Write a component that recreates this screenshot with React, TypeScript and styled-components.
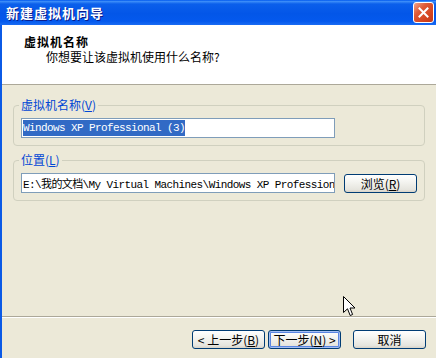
import React from 'react';
import styled, { createGlobalStyle } from 'styled-components';

const GlobalStyle = createGlobalStyle`
    html, body {
        margin:0;
        padding:0;
        background:#ECE9D8;
    }
    body{
        font-family:"Noto Sans CJK SC", "Liberation Sans", sans-serif;
        font-size:12px;
    }
`;

const Window = styled.div`
    position:relative;
    width:436px;
    height:358px;
    display:flex;
    flex-direction:column;
    overflow:hidden;
    background:#ECE9D8;
`;

const TitleBar = styled.div`
    height:25px;
    flex:none;
    display:flex;
    align-items:center;
    justify-content:space-between;
    padding:0 2px 0 6px;
    box-sizing:border-box;
    background:linear-gradient(to bottom, #0058EE 0%, #3A8BF8 6%, #0B5FEB 16%, #0356E8 55%, #0459ED 85%, #1A6CF3 100%);
`;

const Title = styled.span`
    color:white;
    font-weight:bold;
    font-size:13px;
    letter-spacing:1px;
    text-shadow:1px 1px #0A1E8C;
`;

const CloseButton = styled.div`
    width:21px;
    height:21px;
    box-sizing:border-box;
    border:1px solid white;
    border-radius:3px;
    background:linear-gradient(135deg, #F0A48A 0%, #E05A36 35%, #D2421E 75%, #C13A1B 100%);
    display:flex;
    align-items:center;
    justify-content:center;
`;

const Frame = styled.div`
    flex:1;
    display:flex;
    flex-direction:column;
    border-left:2px solid #0B5AE6;
    min-height:0;
`;

const Header = styled.div`
    height:60px;
    flex:none;
    box-sizing:border-box;
    background:white;
    border-bottom:1px solid #ACA899;
    padding:9px 0 0 22px;
    color:black;
`;

const HeaderTitle = styled.div`
    font-weight:bold;
    font-size:12px;
    line-height:15px;
    letter-spacing:1px;
`;

const HeaderText = styled.div`
    font-size:12px;
    line-height:16px;
    padding-left:22px;
`;

const Content = styled.div`
    flex:1;
    padding:13px 11px 0 11px;
    display:flex;
    flex-direction:column;
    gap:7px;
`;

const GroupBox = styled.fieldset`
    margin:0;
    padding:6px 7px 7px 7px;
    border:1px solid #D0D0BF;
    border-radius:4px;
    min-width:0;
`;

const GroupLabel = styled.legend`
    color:#0046D5;
    font-size:12px;
    line-height:14px;
    padding:0 2px;
    margin-left:-2px;
`;

const Key = styled.u`
    text-underline-offset:1px;
`;

const Row = styled.div`
    display:flex;
    align-items:center;
    gap:9px;
`;

const TextBox = styled.div`
    width:314px;
    height:20px;
    box-sizing:border-box;
    border:1px solid #7F9DB9;
    background:white;
    padding:0 1px;
    display:flex;
    align-items:center;
    overflow:hidden;
    white-space:nowrap;
    font-family:"Liberation Mono", "Noto Sans CJK SC", monospace;
    font-size:11px;
    letter-spacing:-0.6px;
    color:black;
`;

const Selected = styled.span`
    background:#316AC5;
    color:white;
    line-height:16px;
`;

const Footer = styled.div`
    height:42px;
    flex:none;
    border-top:1px solid #ACA899;
    box-shadow:inset 0 1px 0 white;
    display:flex;
    justify-content:flex-end;
    align-items:flex-start;
    padding:13px 10px 0 0;
    box-sizing:border-box;
`;

const Button = styled.button<{ $primary?: boolean; $gap?: number }>`
    width:73px;
    height:19px;
    margin-left:${p => p.$gap ?? 0}px;
    padding:0;
    box-sizing:border-box;
    border:1px solid #003C74;
    border-radius:3px;
    background:linear-gradient(to bottom, #FFFFFF 0%, #F4F4F0 40%, #E6E5DE 85%, #D8D3C8 100%);
    box-shadow:${p => p.$primary ? 'inset 0 0 0 1px #A5BEF2, inset 0 0 0 2px #5A86E2' : 'none'};
    font-family:"Noto Sans CJK SC", "Liberation Sans", sans-serif;
    font-size:12px;
    line-height:15px;
    color:black;
    display:flex;
    align-items:center;
    justify-content:center;
`;

const Cursor = styled.svg`
    position:absolute;
    left:343px;
    top:296px;
`;

const App = () => {
    return (
        <>
            <GlobalStyle />
            <Window>
                <TitleBar>
                    <Title>新建虚拟机向导</Title>
                    <CloseButton>
                        <svg width="11" height="11" viewBox="0 0 11 11">
                            <path d="M1.5 1.5 L9.5 9.5 M9.5 1.5 L1.5 9.5" stroke="white" strokeWidth="2" strokeLinecap="square" />
                        </svg>
                    </CloseButton>
                </TitleBar>
                <Frame>
                    <Header>
                        <HeaderTitle>虚拟机名称</HeaderTitle>
                        <HeaderText>你想要让该虚拟机使用什么名称?</HeaderText>
                    </Header>
                    <Content>
                        <GroupBox>
                            <GroupLabel>虚拟机名称(<Key>V</Key>)</GroupLabel>
                            <TextBox>
                                <Selected>Windows XP Professional (3)</Selected>
                            </TextBox>
                        </GroupBox>
                        <GroupBox>
                            <GroupLabel>位置(<Key>L</Key>)</GroupLabel>
                            <Row>
                                <TextBox>E:\我的文档\My Virtual Machines\Windows XP Professional (3)</TextBox>
                                <Button>浏览(<Key>R</Key>)</Button>
                            </Row>
                        </GroupBox>
                    </Content>
                    <Footer>
                        <Button>&lt; 上一步(<Key>B</Key>)</Button>
                        <Button $primary $gap={3}>下一步(<Key>N</Key>) &gt;</Button>
                        <Button $gap={12}>取消</Button>
                    </Footer>
                </Frame>
                <Cursor width="13" height="21" viewBox="0 0 13 21">
                    <path d="M0.5 0.5 L0.5 16.5 L4.5 12.8 L7.2 19.5 L9.6 18.5 L7 12 L12 12 Z" fill="white" stroke="black" strokeWidth="1" strokeLinejoin="miter" />
                </Cursor>
            </Window>
        </>
    );
};

export default App;
